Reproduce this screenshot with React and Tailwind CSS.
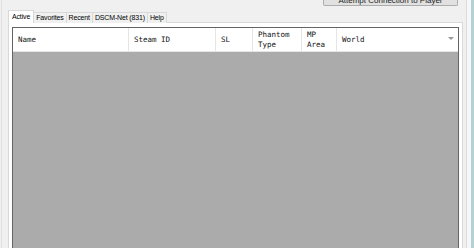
import React from 'react';

const tabs = ['Active', 'Favorites', 'Recent', 'DSCM-Net (831)', 'Help'];

const columns = [
  { label: ['Name'], width: 'w-[116px]' },
  { label: ['Steam ID'], width: 'w-[87px]' },
  { label: ['SL'], width: 'w-[37px]' },
  { label: ['Phantom', 'Type'], width: 'w-[49px]' },
  { label: ['MP', 'Area'], width: 'w-[35px]' },
];

const App = () => {
  return (
    <div className="w-[474px] h-[248px] overflow-hidden bg-[#f0f0f0] flex font-['Liberation_Sans',sans-serif]">
      <div className="flex-1 flex flex-col border-l border-[#e2e2e2] ml-[1px]">
        {/* Top button, cut off by the window edge */}
        <div className="h-[10px] flex">
          <div className="ml-[321px] w-[135px] h-[6px] overflow-hidden border border-t-0 border-[#adadad] bg-[#e1e1e1] rounded-b-[2px] flex justify-center">
            <span className="text-[8px] leading-[8px] -mt-[3px] text-[#222]">Attempt Connection to Player</span>
          </div>
        </div>

        {/* Tabs */}
        <div className="flex items-end ml-[6px] h-[13px] relative z-10 text-[7px] tracking-[-0.15px] text-black">
          {tabs.map((t, i) =>
            i === 0 ? (
              <div
                key={t}
                className="h-[13px] px-[3px] bg-white border border-b-0 border-[#d9d9d9] leading-[11px]"
              >
                {t}
              </div>
            ) : (
              <div
                key={t}
                className="h-[11px] px-[2px] bg-[#f0f0f0] border border-b-0 border-l-0 border-[#d9d9d9] leading-[10px]"
              >
                {t}
              </div>
            )
          )}
        </div>

        {/* Tab panel */}
        <div className="flex-1 ml-[6px] mr-[3px] -mt-[1px] bg-white border border-b-0 border-[#d9d9d9] pt-[4px] px-[3px] flex flex-col">
          <div className="flex-1 border border-b-0 border-[#646464] flex flex-col">
            <div className="h-[24px] bg-white border-b border-[#e5e5e5] flex font-['DejaVu_Sans_Mono',monospace] text-[7.5px] leading-[10px] text-[#111]">
              {columns.map((c) => (
                <div
                  key={c.label.join(' ')}
                  className={`${c.width} shrink-0 border-r border-[#e5e5e5] pl-[5px] flex flex-col justify-center`}
                >
                  {c.label.map((l) => (
                    <span key={l}>{l}</span>
                  ))}
                </div>
              ))}
              <div className="flex-1 pl-[5px] pr-[4px] flex items-center justify-between">
                <span>World</span>
                <svg width="6" height="4" viewBox="0 0 6 4" className="-mt-[2px]">
                  <path d="M0 0 L6 0 L3 3 Z" fill="#9a9a9a" />
                </svg>
              </div>
            </div>
            <div className="flex-1 bg-[#ababab]"></div>
          </div>
        </div>
      </div>
      <div className="w-[5px] bg-[#f7f7f7] border-l border-[#dcdcdc]"></div>
      <div className="w-[3px] bg-[#b3d3d3]"></div>
    </div>
  );
};

export default App;
